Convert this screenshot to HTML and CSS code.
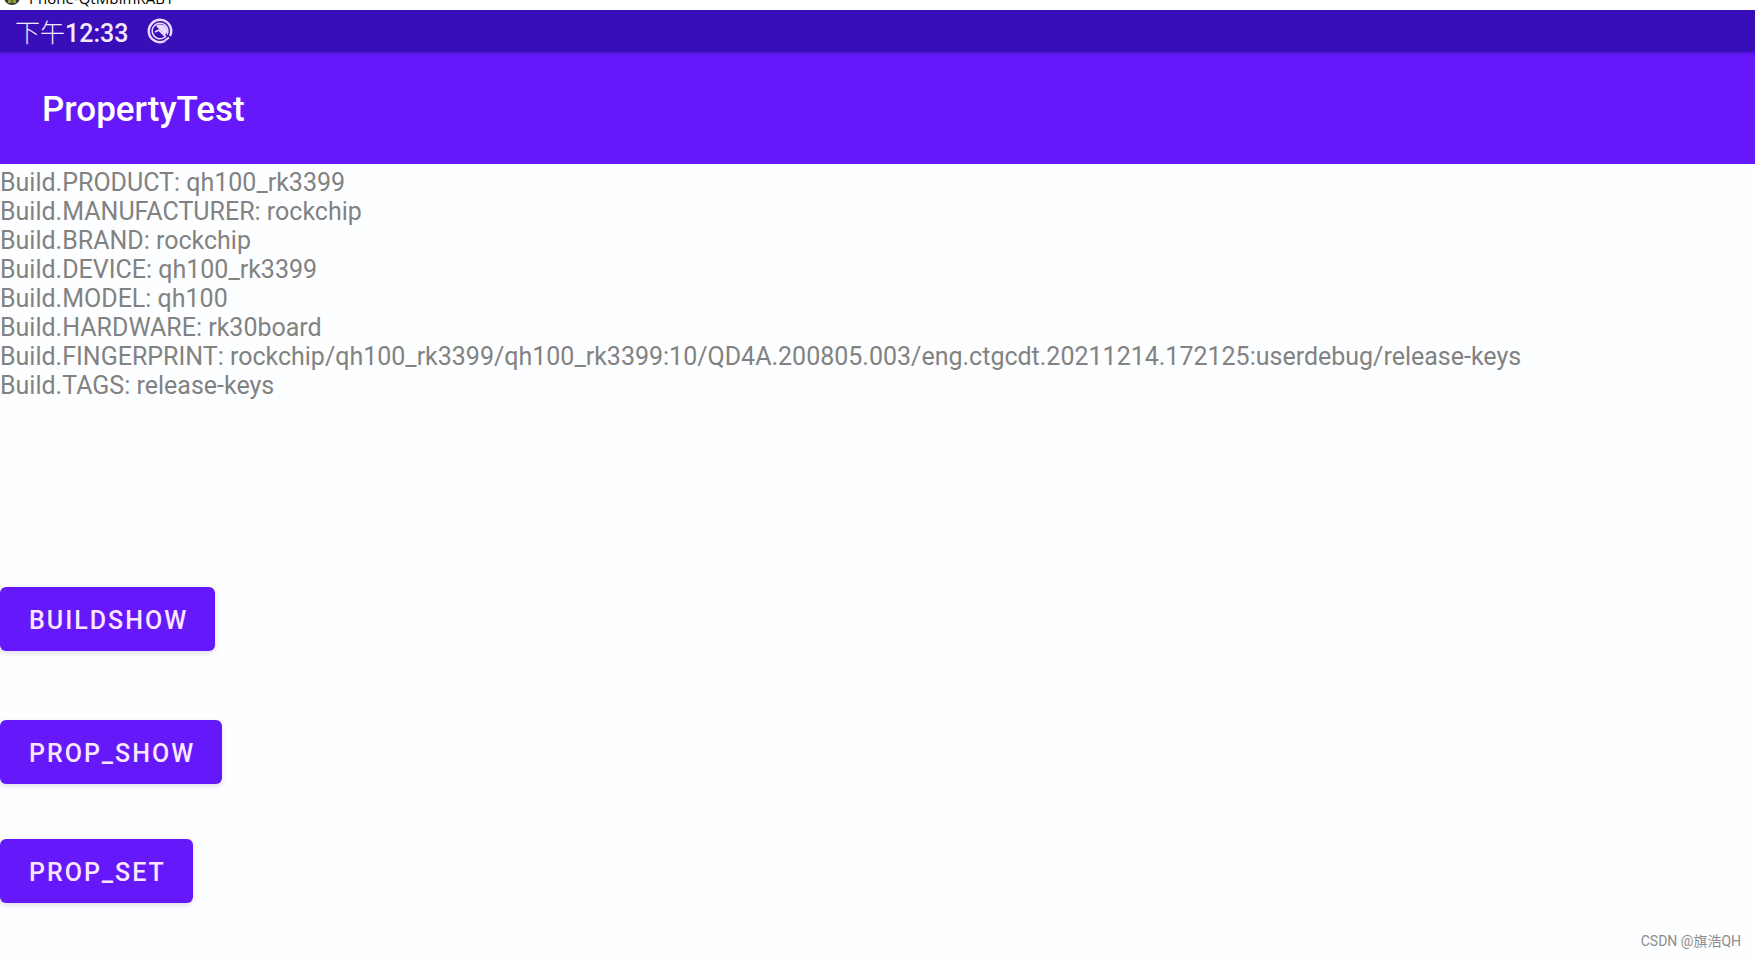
FILE: index.html
```html
<!DOCTYPE html>
<html lang="zh-CN">
<head>
  <meta charset="UTF-8" />
  <meta name="viewport" content="width=device-width, initial-scale=1" />
  <title>PropertyTest</title>
  <link rel="stylesheet" href="styles.css">
</head>
<body>

  <div class="window-title">
    <svg class="window-icon" width="16" height="16" viewBox="0 0 16 16">
      <circle cx="8" cy="8" r="8" fill="#383838" />
      <path d="M4 7a4 4 0 0 1 8 0v7H4z" fill="#87a52f" />
      <path d="M8 10v4" stroke="#383838" />
    </svg>
    <span>Phone-QtMbImRAB1</span>
  </div>

  <div class="status-bar">
    <span><span class="period">下午</span>12:33</span>
    <svg class="status-icon" width="26" height="26" viewBox="0 0 26 26" fill="none" stroke="#eadcff">
      <path d="M18 23A11.200 11.200 0 1 1 23 18" stroke-width="2.400" />
      <path d="M18 19a7.800 7.800 0 1 1 2-2.500" stroke-width="1.500" />
      <path d="M9 8c5-3.500 12 0 11 6l-2 3z" fill="#eadcff" stroke="none" />
      <path d="M8 14l4-2 7 7" stroke-width="1.800" />
      <path d="M18 22.500l4-3" stroke-width="2" />
    </svg>
  </div>

  <header class="app-bar">
    <h1>PropertyTest</h1>
  </header>

  <main>
    <div class="build-info">
      <div>Build.PRODUCT: qh100_rk3399</div>
      <div>Build.MANUFACTURER: rockchip</div>
      <div>Build.BRAND: rockchip</div>
      <div>Build.DEVICE: qh100_rk3399</div>
      <div>Build.MODEL: qh100</div>
      <div>Build.HARDWARE: rk30board</div>
      <div>Build.FINGERPRINT: rockchip/qh100_rk3399/qh100_rk3399:10/QD4A.200805.003/eng.ctgcdt.20211214.172125:userdebug/release-keys</div>
      <div>Build.TAGS: release-keys</div>
    </div>

    <div class="actions">
      <button type="button" class="build-show">BUILDSHOW</button>
      <button type="button" class="prop-show">PROP_SHOW</button>
      <button type="button">PROP_SET</button>
    </div>
  </main>

  <div class="watermark">CSDN @旗浩QH</div>

</body>
</html>
```

FILE: styles.css
```css
* {
  box-sizing: border-box;
}
body {
  display: flex;
  flex-direction: column;
  min-height: 100vh;
  margin: 0;
  font-family: Roboto, "Noto Sans CJK SC", sans-serif;
  background: #fdfeff;
  color: #828282;
}
.window-title {
  display: flex;
  align-items: flex-end;
  gap: 9px;
  height: 10px;
  padding-left: 4px;
  overflow: hidden;
  background: #fff;
  color: #000;
  font-family: "Open Sans", sans-serif;
  font-size: 15px;
  line-height: 16px;
}
.window-title span {
  margin-bottom: 4px;
}
.window-icon {
  flex: none;
  margin-bottom: 5px;
}
.status-bar {
  display: flex;
  align-items: center;
  gap: 19px;
  height: 42px;
  padding-left: 15px;
  background: #380eb8;
  color: #f4e8ff;
  font-size: 25px;
  font-weight: 500;
}
.period {
  font-weight: 300;
}
.app-bar {
  display: flex;
  align-items: center;
  height: 112px;
  padding: 2px 0 0 42px;
  background: linear-gradient(#4f13d8, #6518fa 4px);
  color: #fff;
}
.app-bar h1 {
  margin: 0;
  font-size: 35px;
  font-weight: 500;
}
.build-info {
  padding-top: 4px;
  font-size: 25px;
  line-height: 29px;
}
.actions {
  display: flex;
  flex-direction: column;
  align-items: flex-start;
  margin-top: 187px;
}
button {
  height: 64px;
  padding: 2px 27px 0 29px;
  border: none;
  border-radius: 6px;
  background: #6518fa;
  box-shadow: 0 2px 5px rgba(70, 20, 120, 0.15);
  color: #fbe6ff;
  font-family: Roboto, sans-serif;
  font-size: 25px;
  font-weight: 500;
  letter-spacing: 2px;
  cursor: pointer;
}
.build-show {
  margin-bottom: 69px;
}
.prop-show {
  margin-bottom: 55px;
}
.watermark {
  margin-top: auto;
  padding: 0 14px 6px 0;
  color: #8c8c8c;
  font-family: Roboto, "Noto Sans CJK SC", sans-serif;
  font-size: 14px;
  line-height: 20px;
  text-align: right;
}
```
